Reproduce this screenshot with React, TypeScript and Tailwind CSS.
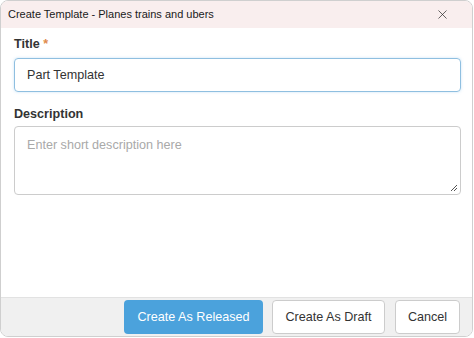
import { X } from 'lucide-react'

// ─── Dialog ───────────────────────────────────────────────────────────────────

export default function App() {
  return (
    <div className="w-[474px] h-[338px] bg-white overflow-hidden">
      <div
        className="w-[473px] h-[337px] flex flex-col border border-[#cfcfcf] rounded-[8px] overflow-hidden bg-white"
        style={{ fontFamily: '"Liberation Sans", Arial, sans-serif' }}
      >
        {/* Title bar */}
        <div className="h-[27px] flex items-center justify-between pl-[7px] pr-[22px] bg-[#f9eeee] shrink-0">
          <span className="text-[11px] text-[#1a1a1a]">
            Create Template - Planes trains and ubers
          </span>
          <X size={15} strokeWidth={1.1} className="text-[#222]" />
        </div>

        {/* Body */}
        <div className="flex-1 flex flex-col pl-[13px] pr-[11px] pt-[6px]">
          <label className="text-[12.6px] font-bold text-[#333] leading-[20px]">
            Title <span className="text-[#e08a4a]">*</span>
          </label>
          <div className="mt-[4px] h-[34px] flex items-center px-[12px] border border-[#8fbfe0] rounded-[4px] shadow-[0_0_3px_rgba(102,175,233,0.35)] text-[12.6px] text-[#333]">
            Part Template
          </div>

          <label className="mt-[12px] text-[12.6px] font-bold text-[#333] leading-[20px]">
            Description
          </label>
          <div className="relative mt-[2px] h-[69px] border border-[#cccccc] rounded-[4px] px-[12px] pt-[9px] text-[12.6px] text-[#a9a9a9]">
            Enter short description here
            <svg
              className="absolute right-[2px] bottom-[2px]"
              width="9"
              height="9"
              viewBox="0 0 9 9"
            >
              <path d="M8 2 L2 8 M8 5 L5 8" stroke="#555" strokeWidth="1" />
            </svg>
          </div>
        </div>

        {/* Footer */}
        <div className="h-[39px] shrink-0 flex items-center justify-end pr-[12px] bg-[#f0f0f0] border-t border-[#e2e2e2]">
          <button className="h-[34px] w-[139px] rounded-[4px] bg-[#4ba2dc] text-white text-[12.6px]">
            Create As Released
          </button>
          <button className="ml-[9px] h-[34px] w-[113px] rounded-[4px] bg-white border border-[#cccccc] text-[#333] text-[12.6px]">
            Create As Draft
          </button>
          <button className="ml-[10px] h-[34px] w-[65px] rounded-[4px] bg-white border border-[#cccccc] text-[#333] text-[12.6px]">
            Cancel
          </button>
        </div>
      </div>
    </div>
  )
}
